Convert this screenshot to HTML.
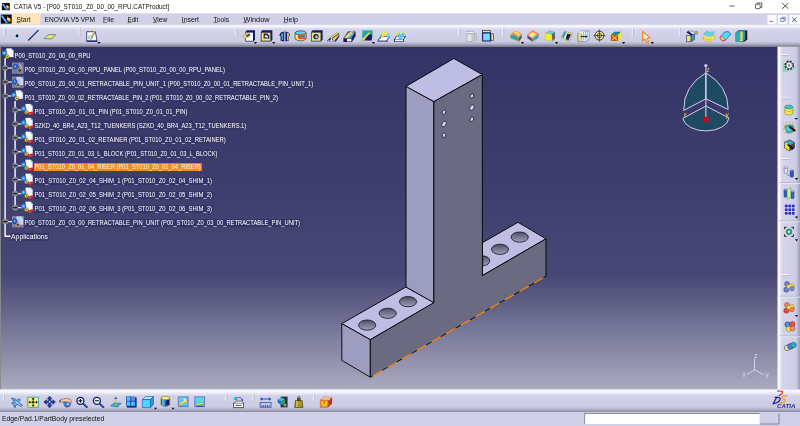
<!DOCTYPE html>
<html><head><meta charset="utf-8"><title>CATIA V5</title>
<style>
html,body{margin:0;padding:0;background:#fff;overflow:hidden}
svg{display:block;will-change:transform}
text{font-family:"Liberation Sans",sans-serif}
.t{font-size:6.4px;fill:#fff}
.m{font-size:6.6px;fill:#111}
</style></head><body>
<svg width="800" height="426" viewBox="0 0 800 426">
<defs>
<linearGradient id="bg" x1="0" y1="0" x2="0" y2="1">
<stop offset="0" stop-color="#333366"/>
<stop offset="0.389" stop-color="#3e3e6e"/>
<stop offset="0.67" stop-color="#484876"/>
<stop offset="0.753" stop-color="#606086"/>
<stop offset="0.825" stop-color="#777799"/>
<stop offset="0.913" stop-color="#9090ac"/>
<stop offset="1" stop-color="#aaaac0"/>
</linearGradient>
<linearGradient id="tb" x1="0" y1="0" x2="0" y2="1">
<stop offset="0" stop-color="#e4e4f4"/>
<stop offset="0.07" stop-color="#fbfbff"/>
<stop offset="0.22" stop-color="#d4d4ea"/>
<stop offset="0.8" stop-color="#cbcbe3"/>
<stop offset="0.93" stop-color="#a6a6c2"/>
<stop offset="1" stop-color="#9494b0"/>
</linearGradient>
<linearGradient id="bb" x1="0" y1="0" x2="0" y2="1">
<stop offset="0" stop-color="#e0e0f0"/>
<stop offset="0.08" stop-color="#fbfbff"/>
<stop offset="0.3" stop-color="#d2d2e9"/>
<stop offset="0.8" stop-color="#cbcbe3"/>
<stop offset="0.95" stop-color="#a8a8c2"/>
<stop offset="1" stop-color="#9a9ab4"/>
</linearGradient>
<linearGradient id="rtb" x1="0" y1="0" x2="1" y2="0">
<stop offset="0" stop-color="#f4f4fc"/>
<stop offset="0.06" stop-color="#ffffff"/>
<stop offset="0.2" stop-color="#d4d4ea"/>
<stop offset="0.82" stop-color="#cdcde5"/>
<stop offset="1" stop-color="#9c9cb6"/>
</linearGradient>
<linearGradient id="hole" x1="0" y1="0" x2="0" y2="1"><stop offset="0" stop-color="#4e4e64"/><stop offset="1" stop-color="#a0a0be"/></linearGradient>
</defs>

<rect x="0" y="0" width="800" height="13.4" fill="#ffffff"/>
<rect x="1.9" y="3" width="7.9" height="7.2" fill="#080810"/><path d="M2.6 4.1 L7.1 10" stroke="#3090e0" stroke-width="1.6"/><path d="M2.6 4.1 L6 8.4" stroke="#b0e0ff" stroke-width="0.6"/><path d="M6.4 4.4 L9.4 7 L8.2 9.4 L6.2 7 Z" fill="#f08020"/><circle cx="7.4" cy="6.8" r="1" fill="#ffe060"/>
<text x="13.8" y="9.1" font-size="6.9" fill="#111" textLength="155.5" lengthAdjust="spacingAndGlyphs">CATIA V5 - [P00_ST010_Z0_00_00_RPU.CATProduct]</text>
<path d="M729.4 6 h5.4" stroke="#222" stroke-width="0.7" fill="none"/>
<rect x="755.5" y="4.2" width="4.6" height="4.4" rx="0.6" fill="none" stroke="#222" stroke-width="0.7"/><path d="M757 4.2 v-1.2 h4.8 v4.6 h-1.6" fill="none" stroke="#222" stroke-width="0.7"/>
<path d="M782.2 3 l6.2 5.8 M788.4 3 l-6.2 5.8" stroke="#222" stroke-width="0.8" fill="none"/>
<rect x="0" y="13.3" width="800" height="11.7" fill="#d0d1e6"/>
<rect x="12" y="13.2" width="28.5" height="11.3" fill="#fde4bc"/>
<rect x="0.8" y="14.6" width="10.8" height="9" fill="#080810"/><path d="M1.6 15.6 L7.4 23.4" stroke="#3090e0" stroke-width="1.9"/><path d="M1.6 15.6 L6 21.4" stroke="#b0e0ff" stroke-width="0.7"/><path d="M7 16 L11 19.4 L9.6 22.4 L6.8 19.4 Z" fill="#f08020"/><circle cx="8.6" cy="19.2" r="1.3" fill="#ffe060"/>
<text class="m" x="16.5" y="21.6" textLength="14.0" lengthAdjust="spacingAndGlyphs">Start</text>
<path d="M16.5 22.6 h3.8" stroke="#111" stroke-width="0.5"/>
<text class="m" x="44.5" y="21.6" textLength="50.5" lengthAdjust="spacingAndGlyphs">ENOVIA V5 VPM</text>
<text class="m" x="103" y="21.6" textLength="11" lengthAdjust="spacingAndGlyphs">File</text>
<path d="M103 22.6 h3.8" stroke="#111" stroke-width="0.5"/>
<text class="m" x="127.5" y="21.6" textLength="10.699999999999989" lengthAdjust="spacingAndGlyphs">Edit</text>
<path d="M127.5 22.6 h3.8" stroke="#111" stroke-width="0.5"/>
<text class="m" x="153" y="21.6" textLength="14.5" lengthAdjust="spacingAndGlyphs">View</text>
<path d="M153 22.6 h3.8" stroke="#111" stroke-width="0.5"/>
<text class="m" x="181.8" y="21.6" textLength="17.19999999999999" lengthAdjust="spacingAndGlyphs">Insert</text>
<path d="M181.8 22.6 h3.8" stroke="#111" stroke-width="0.5"/>
<text class="m" x="213.5" y="21.6" textLength="15.5" lengthAdjust="spacingAndGlyphs">Tools</text>
<path d="M213.5 22.6 h3.8" stroke="#111" stroke-width="0.5"/>
<text class="m" x="243.5" y="21.6" textLength="26.0" lengthAdjust="spacingAndGlyphs">Window</text>
<path d="M243.5 22.6 h3.8" stroke="#111" stroke-width="0.5"/>
<text class="m" x="283.5" y="21.6" textLength="14.5" lengthAdjust="spacingAndGlyphs">Help</text>
<path d="M283.5 22.6 h3.8" stroke="#111" stroke-width="0.5"/>
<rect x="767.5" y="15" width="9" height="9.4" fill="#fbfbff"/><rect x="778" y="15" width="9.5" height="9.4" fill="#fbfbff"/><rect x="789.4" y="15" width="10.6" height="9.4" fill="#fbfbff"/>
<path d="M769.6 21.3 h3.4" stroke="#4860a8" stroke-width="0.9"/>
<rect x="780.8" y="18.6" width="3.2" height="3" fill="none" stroke="#4860a8" stroke-width="0.7"/><path d="M782 18.4 V17.2 H785.4 V20.4 H784.2" fill="none" stroke="#4860a8" stroke-width="0.7"/>
<path d="M792.2 17.6 l4.4 4.2 M796.6 17.6 l-4.4 4.2" stroke="#3858a8" stroke-width="1" fill="none"/>
<rect x="0" y="24.6" width="800" height="21.4" fill="url(#tb)"/>
<rect x="0" y="45.6" width="800" height="1.3" fill="#84847e"/>
<rect x="0" y="46.8" width="777.8" height="342.6" fill="url(#bg)"/>
<rect x="0" y="46.8" width="0.9" height="342.6" fill="#8c8c8a"/>
<g stroke="#000" stroke-width="0.9" stroke-linejoin="round">
<polygon points="341.8,323.7 406,287 434.2,302.7 370.3,339.7" fill="#bebee4"/>
<polygon points="341.8,323.7 370.3,339.7 370.3,377.2 341.8,360.3" fill="#9d9dc0"/>
<polygon points="406,86.4 433.9,101.6 433.9,302.7 406,287" fill="#9d9dc0"/>
<polygon points="453.8,58.5 482.3,74.6 433.9,101.6 406,86.4" fill="#bebee4"/>
<polygon points="482.4,242.7 518,222.3 546,238.8 482.4,275.6" fill="#bebee4"/>
<polygon points="433.9,101.6 482.3,74.6 482.4,275.6 546,238.8 546,276.2 370.3,377.2 370.3,339.7 433.9,302.7" fill="#6a6b81"/>
</g>
<g stroke="#101018" stroke-width="0.8" fill="url(#hole)">
<ellipse cx="367.2" cy="325.1" rx="8.6" ry="5.1"/>
<ellipse cx="387.7" cy="313.3" rx="8.6" ry="5.1"/>
<ellipse cx="408" cy="301.7" rx="8.6" ry="5.1"/>
<ellipse cx="519.7" cy="237.1" rx="8.6" ry="5.1"/>
<ellipse cx="500" cy="249.3" rx="8.6" ry="5.1"/>
<path d="M482.8 255.8 A8.6 5.1 0 0 1 482.8 265.8 Z"/>
</g>
<g stroke="#101018" stroke-width="0.7" fill="#d4d4f4">
<ellipse cx="444" cy="112.2" rx="1.6" ry="2.45" transform="rotate(30 444 112.2)"/>
<ellipse cx="444" cy="124" rx="2.0" ry="3.0" transform="rotate(30 444 124)"/>
<ellipse cx="444" cy="135.2" rx="1.6" ry="2.45" transform="rotate(30 444 135.2)"/>
<ellipse cx="471.9" cy="96" rx="1.6" ry="2.45" transform="rotate(30 471.9 96)"/>
<ellipse cx="471.9" cy="107.6" rx="2.0" ry="3.0" transform="rotate(30 471.9 107.6)"/>
<ellipse cx="471.9" cy="119.2" rx="1.6" ry="2.45" transform="rotate(30 471.9 119.2)"/>
</g>
<path d="M370.3 377.2 L546 276.2" stroke="#ff8a10" stroke-width="1.3" stroke-dasharray="10.7 6.2" stroke-dashoffset="13.9" fill="none"/>
<g stroke="#dcc8f0" stroke-width="1" fill="#1f4a63" stroke-linejoin="round">
<path d="M705.9 72.8 Q683.4 86 683.7 110.5 L705.9 98.8 Z"/>
<path d="M705.9 72.8 Q728.4 86 728.2 109.5 L705.9 98.8 Z"/>
<path d="M705.9 106 L682.8 118.4 A23.2 14 0 0 0 729 118 Z"/>
</g>
<path d="M705.9 66 V118" stroke="#dcc8f0" stroke-width="1.1"/>
<circle cx="705.9" cy="65.6" r="1.6" fill="#dcc8f0"/>
<rect x="703.4" y="116.8" width="5" height="5" fill="#e00010"/>
<g font-size="6.4" fill="#ecd428"><text x="706.6" y="72.2">z</text><text x="683.4" y="117.2">x</text><text x="725.6" y="116.6">y</text></g>
<path d="M754.5 370 V358.5 M754.5 370 L746.5 374.6 M754.5 370 L763.5 374.6" stroke="#d8d8f0" stroke-width="0.9" fill="none"/>
<g font-size="6.5" fill="#d8d8f0"><text x="754.3" y="358">z</text><text x="742.5" y="377">x</text><text x="765.5" y="377">y</text></g>
<path d="M5.1 58 V236.28 H10.8" stroke="#ffffff" stroke-width="1.4" fill="none" stroke-linejoin="round"/>
<path d="M15.1 101 V208.06" stroke="#ffffff" stroke-width="1.4" fill="none"/>
<rect x="13.9" y="51.60" width="77.4" height="7.9" fill="#353568"/>
<text class="t" x="14.5" y="57.80" textLength="76.0" lengthAdjust="spacingAndGlyphs">P00_ST010_Z0_00_00_RPU</text>
<g transform="translate(6.4,48.5)"><path d="M0 0 H5 L7 2 V8.4 H0 Z" fill="#fafaff" stroke="#c8d8f0" stroke-width="0.3"/><path d="M5 0 L7 2 H5 Z" fill="#50c8e0"/><circle cx="-2" cy="4.6" r="2.5" fill="#2488e8" stroke="#1850a8" stroke-width="0.4"/><circle cx="-2" cy="4.6" r="1" fill="#a0e0ff"/><circle cx="0.8" cy="8.2" r="2" fill="#ecd444" stroke="#504010" stroke-width="0.5"/><circle cx="0.8" cy="8.2" r="0.7" fill="#605020"/></g>
<rect x="23.9" y="65.56" width="201.9" height="7.9" fill="#353568"/>
<text class="t" x="24.5" y="71.76" textLength="200.5" lengthAdjust="spacingAndGlyphs">P00_ST010_Z0_00_00_RPU_PANEL (P00_ST010_Z0_00_00_RPU_PANEL)</text>
<path d="M5.2 68.06 H12" stroke="#ffffff" stroke-width="1.1"/>
<circle cx="5.2" cy="68.06" r="2.6" fill="#808084" stroke="#a8a8ac" stroke-width="0.5"/><path d="M2.8000000000000003 68.06 h4.8" stroke="#101010" stroke-width="1"/>
<g transform="translate(12,62.56)"><rect x="0" y="0" width="11.6" height="11.2" fill="#7a7a98"/><path d="M0.5 0.5 H11.1 V10.7 H0.5 Z" fill="none" stroke="#9898b4" stroke-width="0.6" stroke-dasharray="1 1"/><circle cx="3.4" cy="4.2" r="2.4" fill="#2468e0" stroke="#102880" stroke-width="0.5"/><circle cx="3.2" cy="3.8" r="0.9" fill="#60d0ff"/><path d="M7.6 1.2 L10 6.4" stroke="#e8e8f8" stroke-width="0.7"/><path d="M5.4 7.6 L7.4 5.6 L9.8 7.8 L7.6 10.2 Z" fill="#383848" stroke="#d8c040" stroke-width="0.7"/></g>
<rect x="23.9" y="79.52" width="290.15" height="7.9" fill="#353568"/>
<text class="t" x="24.5" y="85.72" textLength="288.75" lengthAdjust="spacingAndGlyphs">P00_ST010_Z0_00_01_RETRACTABLE_PIN_UNIT_1 (P00_ST010_Z0_00_01_RETRACTABLE_PIN_UNIT_1)</text>
<path d="M5.2 82.02 H12" stroke="#ffffff" stroke-width="1.1"/>
<circle cx="5.2" cy="82.02" r="2.6" fill="#808084" stroke="#a8a8ac" stroke-width="0.5"/><path d="M2.8000000000000003 82.02 h4.8" stroke="#101010" stroke-width="1"/>
<g transform="translate(12,76.52)"><rect x="0" y="0" width="11.6" height="11.2" fill="#7a7a98"/><path d="M0.5 0.5 H11.1 V10.7 H0.5 Z" fill="none" stroke="#9898b4" stroke-width="0.6" stroke-dasharray="1 1"/><path d="M4.4 0.4 H9.4 L11.2 2.2 V8.6 H4.4 Z" fill="#d4d4ee"/><path d="M8.6 0.4 H11.2 V3 Z" fill="#40c0e0"/><path d="M6 2 V8 M7.8 2.4 V8" stroke="#a8a8d0" stroke-width="0.6"/><circle cx="2.8" cy="5.4" r="2.4" fill="#2060d8" stroke="#102880" stroke-width="0.5"/><circle cx="2.6" cy="5" r="0.9" fill="#50c8ff"/><path d="M3.8 8.6 L5.8 6.6 L7.8 8.6 L5.8 10.6 Z" fill="#484860" stroke="#d8c050" stroke-width="0.7"/></g>
<rect x="23.9" y="93.48" width="254.9" height="7.9" fill="#353568"/>
<text class="t" x="24.5" y="99.68" textLength="253.5" lengthAdjust="spacingAndGlyphs">P01_ST010_Z0_00_02_RETRACTABLE_PIN_2 (P01_ST010_Z0_00_02_RETRACTABLE_PIN_2)</text>
<path d="M5.2 95.98 H12" stroke="#ffffff" stroke-width="1.1"/>
<circle cx="5.2" cy="95.98" r="2.6" fill="#808084" stroke="#a8a8ac" stroke-width="0.5"/><path d="M2.8000000000000003 95.98 h4.8" stroke="#101010" stroke-width="1"/>
<g transform="translate(15.8,90.38)"><path d="M0 0 H5 L7 2 V8.4 H0 Z" fill="#fafaff" stroke="#c8d8f0" stroke-width="0.3"/><path d="M5 0 L7 2 H5 Z" fill="#50c8e0"/><circle cx="-2" cy="4.6" r="2.5" fill="#2488e8" stroke="#1850a8" stroke-width="0.4"/><circle cx="-2" cy="4.6" r="1" fill="#a0e0ff"/><circle cx="0.8" cy="8.2" r="2" fill="#ecd444" stroke="#504010" stroke-width="0.5"/><circle cx="0.8" cy="8.2" r="0.7" fill="#605020"/></g>
<rect x="33.9" y="107.44" width="154.4" height="7.9" fill="#353568"/>
<text class="t" x="34.5" y="113.64" textLength="153.0" lengthAdjust="spacingAndGlyphs">P01_ST010_Z0_01_01_PIN (P01_ST010_Z0_01_01_PIN)</text>
<path d="M15.1 109.94 H22" stroke="#ffffff" stroke-width="1.1"/>
<circle cx="15.1" cy="109.94" r="2.6" fill="#808084" stroke="#a8a8ac" stroke-width="0.5"/><path d="M12.7 109.94 h4.8" stroke="#101010" stroke-width="1"/>
<g transform="translate(25.6,103.94)"><path d="M0 0 H5 L7 2 V8.4 H0 Z" fill="#fafaff" stroke="#c8d8f0" stroke-width="0.3"/><path d="M5 0 L7 2 H5 Z" fill="#50c8e0"/><circle cx="-2" cy="4.6" r="2.5" fill="#2488e8" stroke="#1850a8" stroke-width="0.4"/><circle cx="-2" cy="4.6" r="1" fill="#a0e0ff"/><circle cx="0.8" cy="8.2" r="2" fill="#ecd444" stroke="#504010" stroke-width="0.5"/><circle cx="0.8" cy="8.2" r="0.7" fill="#605020"/></g><g transform="translate(25.6,103.94)"><path d="M3.2 9 L6.6 7.4 L8 9.4 L4.8 11.2 Z" fill="#e82020"/><circle cx="4.2" cy="10" r="1.2" fill="#e82020"/><circle cx="4.2" cy="10" r="0.5" fill="#ffd0c0"/></g>
<rect x="33.9" y="121.40" width="213.15" height="7.9" fill="#353568"/>
<text class="t" x="34.5" y="127.60" textLength="211.75" lengthAdjust="spacingAndGlyphs">SZKD_40_BR4_A23_T12_TUENKERS (SZKD_40_BR4_A23_T12_TUENKERS.1)</text>
<path d="M15.1 123.90 H22" stroke="#ffffff" stroke-width="1.1"/>
<circle cx="15.1" cy="123.9" r="2.6" fill="#808084" stroke="#a8a8ac" stroke-width="0.5"/><path d="M12.7 123.9 h4.8" stroke="#101010" stroke-width="1"/>
<g transform="translate(25.6,117.9)"><path d="M0 0 H5 L7 2 V8.4 H0 Z" fill="#fafaff" stroke="#c8d8f0" stroke-width="0.3"/><path d="M5 0 L7 2 H5 Z" fill="#50c8e0"/><circle cx="-2" cy="4.6" r="2.5" fill="#2488e8" stroke="#1850a8" stroke-width="0.4"/><circle cx="-2" cy="4.6" r="1" fill="#a0e0ff"/><circle cx="0.8" cy="8.2" r="2" fill="#ecd444" stroke="#504010" stroke-width="0.5"/><circle cx="0.8" cy="8.2" r="0.7" fill="#605020"/></g><g transform="translate(25.6,117.9)"><path d="M3.2 9 L6.6 7.4 L8 9.4 L4.8 11.2 Z" fill="#e82020"/><circle cx="4.2" cy="10" r="1.2" fill="#e82020"/><circle cx="4.2" cy="10" r="0.5" fill="#ffd0c0"/></g>
<rect x="33.9" y="135.36" width="192.65" height="7.9" fill="#353568"/>
<text class="t" x="34.5" y="141.56" textLength="191.25" lengthAdjust="spacingAndGlyphs">P01_ST010_Z0_01_02_RETAINER (P01_ST010_Z0_01_02_RETAINER)</text>
<path d="M15.1 137.86 H22" stroke="#ffffff" stroke-width="1.1"/>
<circle cx="15.1" cy="137.86" r="2.6" fill="#808084" stroke="#a8a8ac" stroke-width="0.5"/><path d="M12.7 137.86 h4.8" stroke="#101010" stroke-width="1"/>
<g transform="translate(25.6,131.86)"><path d="M0 0 H5 L7 2 V8.4 H0 Z" fill="#fafaff" stroke="#c8d8f0" stroke-width="0.3"/><path d="M5 0 L7 2 H5 Z" fill="#50c8e0"/><circle cx="-2" cy="4.6" r="2.5" fill="#2488e8" stroke="#1850a8" stroke-width="0.4"/><circle cx="-2" cy="4.6" r="1" fill="#a0e0ff"/><circle cx="0.8" cy="8.2" r="2" fill="#ecd444" stroke="#504010" stroke-width="0.5"/><circle cx="0.8" cy="8.2" r="0.7" fill="#605020"/></g><g transform="translate(25.6,131.86)"><path d="M3.2 9 L6.6 7.4 L8 9.4 L4.8 11.2 Z" fill="#e82020"/><circle cx="4.2" cy="10" r="1.2" fill="#e82020"/><circle cx="4.2" cy="10" r="0.5" fill="#ffd0c0"/></g>
<rect x="33.9" y="149.32" width="184.4" height="7.9" fill="#353568"/>
<text class="t" x="34.5" y="155.52" textLength="183.0" lengthAdjust="spacingAndGlyphs">P01_ST010_Z0_01_03_L_BLOCK (P01_ST010_Z0_01_03_L_BLOCK)</text>
<path d="M15.1 151.82 H22" stroke="#ffffff" stroke-width="1.1"/>
<circle cx="15.1" cy="151.82" r="2.6" fill="#808084" stroke="#a8a8ac" stroke-width="0.5"/><path d="M12.7 151.82 h4.8" stroke="#101010" stroke-width="1"/>
<g transform="translate(25.6,145.82)"><path d="M0 0 H5 L7 2 V8.4 H0 Z" fill="#fafaff" stroke="#c8d8f0" stroke-width="0.3"/><path d="M5 0 L7 2 H5 Z" fill="#50c8e0"/><circle cx="-2" cy="4.6" r="2.5" fill="#2488e8" stroke="#1850a8" stroke-width="0.4"/><circle cx="-2" cy="4.6" r="1" fill="#a0e0ff"/><circle cx="0.8" cy="8.2" r="2" fill="#ecd444" stroke="#504010" stroke-width="0.5"/><circle cx="0.8" cy="8.2" r="0.7" fill="#605020"/></g><g transform="translate(25.6,145.82)"><path d="M3.2 9 L6.6 7.4 L8 9.4 L4.8 11.2 Z" fill="#e82020"/><circle cx="4.2" cy="10" r="1.2" fill="#e82020"/><circle cx="4.2" cy="10" r="0.5" fill="#ffd0c0"/></g>
<rect x="34.0" y="163.18" width="167.85" height="7.8" fill="#ff8c10"/>
<text class="t" x="34.5" y="169.48" textLength="166.25" lengthAdjust="spacingAndGlyphs">P01_ST010_Z0_01_04_RISER (P01_ST010_Z0_01_04_RISER)</text>
<path d="M15.1 165.78 H22" stroke="#ffffff" stroke-width="1.1"/>
<circle cx="15.1" cy="165.78" r="2.6" fill="#808084" stroke="#a8a8ac" stroke-width="0.5"/><path d="M12.7 165.78 h4.8" stroke="#101010" stroke-width="1"/>
<g transform="translate(25.6,159.78)"><path d="M0 0 H5 L7 2 V8.4 H0 Z" fill="#fafaff" stroke="#c8d8f0" stroke-width="0.3"/><path d="M5 0 L7 2 H5 Z" fill="#50c8e0"/><circle cx="-2" cy="4.6" r="2.5" fill="#2488e8" stroke="#1850a8" stroke-width="0.4"/><circle cx="-2" cy="4.6" r="1" fill="#a0e0ff"/><circle cx="0.8" cy="8.2" r="2" fill="#ecd444" stroke="#504010" stroke-width="0.5"/><circle cx="0.8" cy="8.2" r="0.7" fill="#605020"/></g><g transform="translate(25.6,159.78)"><path d="M3.2 9 L6.6 7.4 L8 9.4 L4.8 11.2 Z" fill="#e82020"/><circle cx="4.2" cy="10" r="1.2" fill="#e82020"/><circle cx="4.2" cy="10" r="0.5" fill="#ffd0c0"/></g>
<rect x="33.9" y="177.24" width="178.9" height="7.9" fill="#353568"/>
<text class="t" x="34.5" y="183.44" textLength="177.5" lengthAdjust="spacingAndGlyphs">P01_ST010_Z0_02_04_SHIM_1 (P01_ST010_Z0_02_04_SHIM_1)</text>
<path d="M15.1 179.74 H22" stroke="#ffffff" stroke-width="1.1"/>
<circle cx="15.1" cy="179.74" r="2.6" fill="#808084" stroke="#a8a8ac" stroke-width="0.5"/><path d="M12.7 179.74 h4.8" stroke="#101010" stroke-width="1"/>
<g transform="translate(25.6,173.74)"><path d="M0 0 H5 L7 2 V8.4 H0 Z" fill="#fafaff" stroke="#c8d8f0" stroke-width="0.3"/><path d="M5 0 L7 2 H5 Z" fill="#50c8e0"/><circle cx="-2" cy="4.6" r="2.5" fill="#2488e8" stroke="#1850a8" stroke-width="0.4"/><circle cx="-2" cy="4.6" r="1" fill="#a0e0ff"/><circle cx="0.8" cy="8.2" r="2" fill="#ecd444" stroke="#504010" stroke-width="0.5"/><circle cx="0.8" cy="8.2" r="0.7" fill="#605020"/></g><g transform="translate(25.6,173.74)"><path d="M3.2 9 L6.6 7.4 L8 9.4 L4.8 11.2 Z" fill="#e82020"/><circle cx="4.2" cy="10" r="1.2" fill="#e82020"/><circle cx="4.2" cy="10" r="0.5" fill="#ffd0c0"/></g>
<rect x="33.9" y="191.20" width="178.9" height="7.9" fill="#353568"/>
<text class="t" x="34.5" y="197.40" textLength="177.5" lengthAdjust="spacingAndGlyphs">P01_ST010_Z0_02_05_SHIM_2 (P01_ST010_Z0_02_05_SHIM_2)</text>
<path d="M15.1 193.70 H22" stroke="#ffffff" stroke-width="1.1"/>
<circle cx="15.1" cy="193.7" r="2.6" fill="#808084" stroke="#a8a8ac" stroke-width="0.5"/><path d="M12.7 193.7 h4.8" stroke="#101010" stroke-width="1"/>
<g transform="translate(25.6,187.7)"><path d="M0 0 H5 L7 2 V8.4 H0 Z" fill="#fafaff" stroke="#c8d8f0" stroke-width="0.3"/><path d="M5 0 L7 2 H5 Z" fill="#50c8e0"/><circle cx="-2" cy="4.6" r="2.5" fill="#2488e8" stroke="#1850a8" stroke-width="0.4"/><circle cx="-2" cy="4.6" r="1" fill="#a0e0ff"/><circle cx="0.8" cy="8.2" r="2" fill="#ecd444" stroke="#504010" stroke-width="0.5"/><circle cx="0.8" cy="8.2" r="0.7" fill="#605020"/></g><g transform="translate(25.6,187.7)"><path d="M3.2 9 L6.6 7.4 L8 9.4 L4.8 11.2 Z" fill="#e82020"/><circle cx="4.2" cy="10" r="1.2" fill="#e82020"/><circle cx="4.2" cy="10" r="0.5" fill="#ffd0c0"/></g>
<rect x="33.9" y="205.16" width="178.9" height="7.9" fill="#353568"/>
<text class="t" x="34.5" y="211.36" textLength="177.5" lengthAdjust="spacingAndGlyphs">P01_ST010_Z0_02_06_SHIM_3 (P01_ST010_Z0_02_06_SHIM_3)</text>
<path d="M15.1 207.66 H22" stroke="#ffffff" stroke-width="1.1"/>
<circle cx="15.1" cy="207.66" r="2.6" fill="#808084" stroke="#a8a8ac" stroke-width="0.5"/><path d="M12.7 207.66 h4.8" stroke="#101010" stroke-width="1"/>
<g transform="translate(25.6,201.66)"><path d="M0 0 H5 L7 2 V8.4 H0 Z" fill="#fafaff" stroke="#c8d8f0" stroke-width="0.3"/><path d="M5 0 L7 2 H5 Z" fill="#50c8e0"/><circle cx="-2" cy="4.6" r="2.5" fill="#2488e8" stroke="#1850a8" stroke-width="0.4"/><circle cx="-2" cy="4.6" r="1" fill="#a0e0ff"/><circle cx="0.8" cy="8.2" r="2" fill="#ecd444" stroke="#504010" stroke-width="0.5"/><circle cx="0.8" cy="8.2" r="0.7" fill="#605020"/></g><g transform="translate(25.6,201.66)"><path d="M3.2 9 L6.6 7.4 L8 9.4 L4.8 11.2 Z" fill="#e82020"/><circle cx="4.2" cy="10" r="1.2" fill="#e82020"/><circle cx="4.2" cy="10" r="0.5" fill="#ffd0c0"/></g>
<rect x="23.9" y="219.12" width="276.9" height="7.9" fill="#353568"/>
<text class="t" x="24.5" y="225.32" textLength="275.5" lengthAdjust="spacingAndGlyphs">P00_ST010_Z0_03_00_RETRACTABLE_PIN_UNIT (P00_ST010_Z0_03_00_RETRACTABLE_PIN_UNIT)</text>
<path d="M5.2 221.62 H12" stroke="#ffffff" stroke-width="1.1"/>
<circle cx="5.2" cy="221.62" r="2.6" fill="#808084" stroke="#a8a8ac" stroke-width="0.5"/><path d="M2.8000000000000003 221.62 h4.8" stroke="#101010" stroke-width="1"/>
<g transform="translate(12,216.12)"><rect x="0" y="0" width="11.6" height="11.2" fill="#7a7a98"/><path d="M0.5 0.5 H11.1 V10.7 H0.5 Z" fill="none" stroke="#9898b4" stroke-width="0.6" stroke-dasharray="1 1"/><path d="M4.4 0.4 H9.4 L11.2 2.2 V8.6 H4.4 Z" fill="#d4d4ee"/><path d="M8.6 0.4 H11.2 V3 Z" fill="#40c0e0"/><path d="M6 2 V8 M7.8 2.4 V8" stroke="#a8a8d0" stroke-width="0.6"/><circle cx="2.8" cy="5.4" r="2.4" fill="#2060d8" stroke="#102880" stroke-width="0.5"/><circle cx="2.6" cy="5" r="0.9" fill="#50c8ff"/><path d="M3.8 8.6 L5.8 6.6 L7.8 8.6 L5.8 10.6 Z" fill="#484860" stroke="#d8c050" stroke-width="0.7"/></g>
<rect x="10.6" y="233.08" width="38.3" height="7.9" fill="#353568"/>
<text class="t" x="11" y="239.28" textLength="37" lengthAdjust="spacingAndGlyphs">Applications</text>
<rect x="777.6" y="46.8" width="22.4" height="343" fill="url(#rtb)"/>

<rect x="0" y="389.3" width="800" height="22" fill="url(#bb)"/>

<rect x="0" y="411.8" width="800" height="14.2" fill="#cfcfe6"/>
<rect x="0" y="410.9" width="800" height="0.9" fill="#80809a"/>
<text x="2" y="421.3" font-size="6.8" fill="#111" textLength="102.3" lengthAdjust="spacingAndGlyphs">Edge/Pad.1/PartBody preselected</text>
<rect x="584.6" y="413.5" width="175" height="10.5" fill="#fff"/><path d="M584.6 424 V413.5 H759.6" fill="none" stroke="#70708a" stroke-width="0.8"/>
<rect x="760.4" y="413.5" width="18.6" height="10.5" fill="#cfcfe6"/><path d="M760.4 424 H779 V413.5" fill="none" stroke="#70708a" stroke-width="0.8"/>
<path d="M4.1 27.4 V36" stroke="#fafaff" stroke-width="1"/><path d="M5.0 27.7 V36.3" stroke="#a8a8c0" stroke-width="0.6"/>
<circle cx="17" cy="36" r="2.1" fill="#f0f0ff"/><circle cx="17.1" cy="36.2" r="1.6" fill="#40c0e8"/><rect x="15.8" y="34.5" width="2.4" height="2.4" rx="0.6" fill="#0c0c50"/>
<path d="M28.2 40.5 L38.5 30.2" stroke="#182080" stroke-width="1.2"/>
<path d="M44.3 38.6 L48.1 34.6 H55.8 L51.7 38.9 Z" fill="#ece264" stroke="#2878a0" stroke-width="0.7"/>
<path d="M79.1 27.4 V36" stroke="#fafaff" stroke-width="1"/><path d="M80.0 27.7 V36.3" stroke="#a8a8c0" stroke-width="0.6"/>
<g transform="translate(86.4,31.4)"><path d="M0.3 0.3 H9 L10.6 9.6 H0.3 Z" fill="#fbfbff" stroke="#20205c" stroke-width="0.8"/><path d="M0.3 9.8 H10.8" stroke="#20205c" stroke-width="1.3"/><circle cx="4" cy="6" r="1.8" fill="none" stroke="#30a060" stroke-width="0.7"/><path d="M4.3 6.8 L8.6 -0.6" stroke="#e8c830" stroke-width="1.5"/><path d="M5.1 7.1 L9.3 -0.2" stroke="#2848a8" stroke-width="0.6"/></g>
<path d="M97.3 42.1 h3.4 l-1.7 1.9 Z" fill="#101010"/>
<path d="M236 27.4 V36" stroke="#fafaff" stroke-width="1"/><path d="M236.9 27.7 V36.3" stroke="#a8a8c0" stroke-width="0.6"/>
<g transform="translate(243,30.2)"><path d="M2.4 1.8 L3.8 0 H12 V9.4 L10.6 11.2 H2.4 Z" fill="#18186a"/><path d="M3 2.4 H10 V10.6 H3 Z" fill="#f8f8ff"/><path d="M0.4 4.8 L5.6 2.6 L6.8 3.6 V6 L1.6 8.6 L0.4 7.4 Z" fill="#f0e468" stroke="#504c20" stroke-width="0.3"/><path d="M3 5.4 L6.8 3.6 V5 L3.4 6.8 Z" fill="#18186a"/></g>
<path d="M253.70000000000002 42.1 h3.4 l-1.7 1.9 Z" fill="#101010"/>
<g transform="translate(260.6,30.2)"><path d="M0.2 1.8 L1.6 0 H11.8 V9.4 L10.4 11.2 H0.2 Z" fill="#18186a"/><path d="M0.9 2.5 H9.8 V10.5 H0.9 Z" fill="#f0e468"/><path d="M3 3.4 H6.6 L8.8 5.6 V8.4 H3 Z" fill="#18186a"/><path d="M4.2 5 H6.4 L7.6 6.2 V7.4 H4.2 Z" fill="#e4e4fa"/></g>
<path d="M272.0 42.1 h3.4 l-1.7 1.9 Z" fill="#101010"/>
<g transform="translate(278.6,30.2)"><path d="M5.6 1.2 Q1 1.6 0.8 5.6 L2 6 V10.6 L5.6 11.2 Z" fill="#18186a"/><path d="M4.6 2.6 Q2.2 3 2 5.4 L3 5.8 V9.6 L4.6 10 Z" fill="#30b0b8"/><path d="M6.8 1.2 Q11.2 1.6 11.4 5.6 L10.2 6 V10.6 L6.8 11.2 Z" fill="#18186a"/><path d="M8.6 2.4 Q10.4 3.2 10.6 5.2 L9.8 5.6 V10 L8.6 10.4 Z" fill="#f0e468"/><path d="M6.2 0.2 V11.6" stroke="#8080b0" stroke-width="0.5"/></g>
<g transform="translate(294.5,30.2)"><path d="M0.6 2.6 V8.8 Q5.8 12.6 11.6 8.8 V2.6 Z" fill="#f0e468" stroke="#18186a" stroke-width="0.6"/><ellipse cx="6.1" cy="2.6" rx="5.4" ry="2" fill="#50d8f0" stroke="#18186a" stroke-width="0.6"/><path d="M11.6 4.4 H4.4 Q2.4 6.6 4.4 8.8 H11.6 V7.6 H6 V5.6 H11.6 Z" fill="#e03828" stroke="#f0a020" stroke-width="0.3"/><path d="M6 5.8 H11 L10 7.4 H6 Z" fill="#2070a0"/></g>
<g transform="translate(311,30.2)"><path d="M0.2 1.8 L1.6 0 H11.6 V9.2 L10.2 11.2 H0.2 Z" fill="#18186a"/><path d="M0.8 2.4 H9.6 V10.6 H0.8 Z" fill="#f0e468"/><circle cx="5" cy="6.4" r="2.7" fill="#18186a"/><circle cx="5.3" cy="6.6" r="1.5" fill="#9898c0"/><circle cx="5.8" cy="6.8" r="0.8" fill="#f0f0ff"/></g>
<g transform="translate(327.2,30.2)"><path d="M0.4 10 L3.4 7 L10.4 2.4 L12 3.6 V6.4 L8.6 11.6 H0.4 Z" fill="#18186a"/><path d="M0.8 10.2 H3.6 V8.4 L5 7.6 V10.2 H8 V11.2 H0.8 Z" fill="#fafaff"/><path d="M3 7.2 L10.4 2 L11.6 3 L5.4 7.4 L4.6 8.6 L3 8.4 Z" fill="#f0e468" stroke="#706820" stroke-width="0.3"/><path d="M5.6 8 L11.4 3.8 V5.6 L7.6 10 H5.6 Z" fill="#d8d060"/></g>
<g transform="translate(343.4,30)"><path d="M0 8.4 L4.6 1.6 H12.2 V6 L8.6 12 H0 Z" fill="#18186a"/><path d="M0.8 8.2 L5 2.4 H11.4 L7.6 8.2 Z" fill="#dcdcf4"/><path d="M1 7.6 L8.6 0.6 L10 1.4 L3 8.2 Z" fill="#f0e468" stroke="#706820" stroke-width="0.3"/><path d="M4.4 8 L9.8 3 L11 3.4 L6.8 8.2 Z" fill="#28a0b0"/><path d="M3.6 8.8 H8 V11.4 H3.6 Z" fill="#fafaff"/></g>
<g transform="translate(360.6,30)"><path d="M1.6 0.4 H12 V8 H1.6 Z" fill="#28a8a0"/><path d="M3.6 10.6 L8 4.4 H11.2 V10.6 Z" fill="#18186a"/><path d="M0.4 10.4 L8.4 2 L9.8 3 L2 11.2 Z" fill="#f0e468" stroke="#706820" stroke-width="0.3"/></g>
<path d="M371.7 42.1 h3.4 l-1.7 1.9 Z" fill="#101010"/>
<g transform="translate(377.6,30)"><path d="M0.2 10 L3 6.4 H12.6 L9.8 10 V12 H0.2 Z" fill="#18186a"/><path d="M1 10 L3.4 7 H11.4 L9 10 Z" fill="#fafaff"/><path d="M0.8 10.4 H9 V11.4 H0.8 Z" fill="#fafaff"/><path d="M1.4 8.4 L4.6 3 L5.8 3.6 L3 8.8 Z" fill="#28a0b0"/><path d="M4.8 8.4 Q4.6 2.2 7.6 2.2 Q9.8 2.6 9.4 6" fill="none" stroke="#f0e838" stroke-width="2"/><path d="M9 4.4 L11.4 3 L12 6.6 L9.8 8 Z" fill="#50d8f0"/></g>
<g transform="translate(393.8,30)"><path d="M0.2 9.4 L2.4 6 H12.4 L10 9.4 V12 H0.2 Z" fill="#18186a"/><path d="M1 9.6 H9.2 V11.4 H1 Z" fill="#fafaff"/><path d="M1.2 9.2 L3 6.6 H11.2 L9.2 9.2 Z" fill="#fafaff"/><path d="M3 3.8 L5.4 3 L6.8 6 L9 2.8 L11 3.8 L7.4 9.4 L5.6 9.2 Z" fill="#50d8f0" stroke="#1880a0" stroke-width="0.3"/><path d="M1.6 4.2 L4.6 2 L5.4 3 L3 5.4 Z" fill="#f0e838"/><path d="M9 2.8 L11.6 0.8 L12.2 2 L11 3.8 Z" fill="#f0e838"/></g>
<path d="M459 27.4 V36" stroke="#fafaff" stroke-width="1"/><path d="M459.9 27.7 V36.3" stroke="#a8a8c0" stroke-width="0.6"/>
<g transform="translate(465,30)"><path d="M0.4 1.4 H8.6 M0.4 3.6 H8.6 M2 3.6 V11.4 M7 3.6 V11.4 M2 11.4 H7 M9.4 2.4 V10.4 M11.4 4 V10.4 M9.4 10.4 H11.4 M9.4 4 H12" fill="none" stroke="#b4b4be" stroke-width="1"/><rect x="2.6" y="4.6" width="3.8" height="6.2" fill="#e4e4ea"/><path d="M1 2 H8 V3 H1 Z" fill="#ececf2"/></g>
<g transform="translate(481.8,30)"><rect x="0.8" y="0.6" width="7.6" height="2.2" fill="#f0e468" stroke="#18186a" stroke-width="0.6"/><rect x="0.8" y="3" width="7.8" height="8" fill="#50d8f0" stroke="#18186a" stroke-width="1"/><rect x="2" y="4.2" width="5.4" height="5.6" fill="#70e0f8"/><rect x="9.2" y="3.8" width="2.6" height="6.6" fill="#f0e468" stroke="#18186a" stroke-width="0.6"/></g>
<path d="M502.9 27.4 V36" stroke="#fafaff" stroke-width="1"/><path d="M503.79999999999995 27.7 V36.3" stroke="#a8a8c0" stroke-width="0.6"/>
<g transform="translate(509.8,30.2)"><path d="M0.6 4.6 L3.6 1.6 Q8.6 0 11.8 4.4 L9 8 Q5.6 3.4 0.6 4.6 Z" fill="#f08878" stroke="#e8c020" stroke-width="0.5"/><path d="M5 1.6 Q8.6 1.4 10.4 4.4 L8.6 6 Q7 3 4 2.6 Z" fill="#f8e870"/><path d="M0.6 4.6 Q5.6 3.4 9 8 V11.4 L0.6 8 Z" fill="#28a0b0" stroke="#e8c020" stroke-width="0.5"/><path d="M9 8 L11.8 4.4 V7.8 L9 11.4 Z" fill="#484858"/></g>
<path d="M520.8 42.1 h3.4 l-1.7 1.9 Z" fill="#101010"/>
<g transform="translate(527,30.2)"><path d="M0.4 5 L5.4 0.6 L11.6 3.6 L5 8.6 Z" fill="#f4a090" stroke="#e04030" stroke-width="0.5"/><path d="M1.8 5 L5.4 2 L9.4 4 L5 7.2 Z" fill="#f8e878"/><path d="M5 8.6 L11.6 3.6 V7.8 L5.6 11.6 Z" fill="#30a8d0" stroke="#e8c040" stroke-width="0.3"/><path d="M0.4 5 L5 8.6 L5.6 11.6 L0.4 8 Z" fill="#505060"/></g>
<g transform="translate(543.8,30)"><path d="M2 3 L6 0.8 L11.2 2.2 L7.8 4.2 Z" fill="#50d8f0" stroke="#e04030" stroke-width="0.3"/><path d="M7.8 4.2 L11.2 2.2 V8.6 L8.6 11.4 Z" fill="#606070"/><path d="M2 3 L7.8 4.2 L8.6 11.4 L0.6 9.2 Z" fill="#f4f020" stroke="#a09820" stroke-width="0.3"/></g>
<path d="M554.9 42.1 h3.4 l-1.7 1.9 Z" fill="#101010"/>
<g transform="translate(561,30)"><path d="M0.4 7.4 L3.4 1.2 L11.4 3.4 L8 11.4 Z" fill="#f0e468" stroke="#606090" stroke-width="0.4"/><path d="M5.6 3.4 L10 4.4 L7.4 10 L5 9.2 Z" fill="#18186a"/><path d="M0.8 7.2 L3.6 1.8 L5.6 2.4 L2.8 8 Z" fill="#28a0b0"/><path d="M2.8 8 L5.6 2.4 L6.6 2.8 L4 8.6 Z" fill="#f4f4c0"/></g>
<g transform="translate(577.5,30)"><path d="M0.4 3.4 L3.4 1 H11.8 V9 L8.6 11.6 H0.4 Z" fill="#e0f0f8" stroke="#4868b0" stroke-width="0.5"/><path d="M0.6 3.6 H4 V11.4 H0.6 Z" fill="#f0e468" stroke="#4868b0" stroke-width="0.4"/><path d="M0.6 3.6 L3.4 1.2 H6 L4 3.6 Z" fill="#f8f4a0"/><path d="M6 2 V10.6 M8 1.4 V10.6 M10 1.4 V9.6" stroke="#60b8c8" stroke-width="0.7"/><path d="M3 6.6 H8.6" stroke="#18186a" stroke-width="1"/><path d="M8.2 5.2 L10 6.6 L8.2 8 Z" fill="#18186a"/></g>
<g transform="translate(593.8,29.8)"><circle cx="5.6" cy="5.8" r="4.5" fill="#e8e078" stroke="#18186a" stroke-width="0.8"/><circle cx="5.6" cy="5.8" r="2.2" fill="none" stroke="#504818" stroke-width="0.7"/><path d="M5.6 -0.2 V11.8 M-0.2 5.8 H11.4" stroke="#18186a" stroke-width="0.7"/></g>
<g transform="translate(610.5,30.6)"><path d="M0.4 4.2 L4 1.2 H10.8 L7.6 4.2 Z" fill="#18888c"/><path d="M7.6 4.2 L10.8 1.2 V6.8 L7.6 10.4 Z" fill="#f0ec30"/><path d="M0.4 4.2 H7.6 V10.4 H0.4 Z" fill="#e83820"/><path d="M1.4 5 L6.8 9.6 M6.8 5 L1.4 9.6" stroke="#f0c020" stroke-width="1.2"/><path d="M0.4 4.2 h1.4 v1.2 h-1.4 Z M6.2 9.2 h1.4 v1.2 h-1.4 Z M0.4 9.2 h1.4 v1.2 h-1.4 Z M6.2 4.2 h1.4 v1.2 h-1.4 Z" fill="#30a040"/></g>
<path d="M621.9 42.1 h3.4 l-1.7 1.9 Z" fill="#101010"/>
<path d="M632.3 27.4 V36" stroke="#fafaff" stroke-width="1"/><path d="M633.1999999999999 27.7 V36.3" stroke="#a8a8c0" stroke-width="0.6"/>
<path d="M642.6 31.4 V41 L644.9 38.9 L646.8 42.6 L648.6 41.7 L646.7 38.2 L650 37.8 Z" fill="#fffaf0" stroke="#f08020" stroke-width="1.1" stroke-linejoin="round"/>
<path d="M650.5999999999999 42.1 h3.4 l-1.7 1.9 Z" fill="#101010"/>
<path d="M679.3 27.4 V36" stroke="#fafaff" stroke-width="1"/><path d="M680.1999999999999 27.7 V36.3" stroke="#a8a8c0" stroke-width="0.6"/>
<g transform="translate(685.7,30)"><path d="M0.8 5.4 H5.4 V11.6 H0.8 Z" fill="#f0e468" stroke="#18186a" stroke-width="0.6"/><path d="M5.4 5.4 L8.8 4 V9.6 L5.4 11.6 Z" fill="#28a0b0" stroke="#18186a" stroke-width="0.5"/><path d="M0.6 2.2 L2.4 1 L7.4 4.4 L5.6 5.4 Z" fill="#18186a"/><path d="M2.4 1 L7.6 1.4 L8.8 4 L7.4 4.4 Z" fill="#fafaff" stroke="#18186a" stroke-width="0.4"/><rect x="8.8" y="1.2" width="3.2" height="3.2" fill="#808088"/><rect x="9.8" y="2.2" width="1.2" height="1.2" fill="#f0e468"/></g>
<g transform="translate(702.7,30)"><path d="M0.6 7.6 L3 5 Q7.4 7.6 12 5 V8.6 Q8 12.6 4.4 11.4 L0.6 10 Z" fill="#f0e468" stroke="#a09828" stroke-width="0.4"/><path d="M0.6 8.6 Q5 11 9 9" fill="none" stroke="#a09828" stroke-width="0.4"/><path d="M0.6 4.4 L3.6 1 Q7.6 3 12 1.6 L9.6 5.6 Q5 8 0.6 4.4 Z" fill="#50d8f0" stroke="#e06040" stroke-width="0.3"/><path d="M0.6 4.4 Q5 8 9.6 5.6 V7.2 Q5 9.4 0.6 6.2 Z" fill="#e8dc60"/></g>
<g transform="translate(719,30)"><path d="M0.8 7.2 L5.6 2 Q9.6 0 12 4 L6.2 10.6 Q2 12 0.8 7.2 Z" fill="#50d8f0" stroke="#3050e0" stroke-width="0.7"/><path d="M1 7.2 Q2 6 3.8 7 Q6 8.4 5.8 10.6 Q2.4 11.6 1 7.2 Z" fill="#f8d880" stroke="#e83020" stroke-width="0.7"/></g>
<g transform="translate(735.1,30)"><path d="M3 0.4 H12.2 V9.2 L10 11.6 H3 Z" fill="#181820"/><path d="M0.6 2.6 L3 0.8 H10 V9.6 L7.6 11.6 H0.6 Z" fill="#20a0a8" stroke="#106070" stroke-width="0.4"/><path d="M0.6 2.6 H7.6 V11.6 H0.6 Z" fill="#28b0b8"/><path d="M4.8 1.6 H7.4 V11 H4.8 Z" fill="#f0e468"/><path d="M4.8 3 H6 M4.8 4.6 H6 M4.8 6.2 H6 M4.8 7.8 H6 M4.8 9.4 H6" stroke="#504818" stroke-width="0.5"/><path d="M10 0.8 V9.6" stroke="#e04030" stroke-width="0.3"/></g>
<path d="M3.8 393.6 V401" stroke="#fafaff" stroke-width="1"/><path d="M4.7 393.90000000000003 V401.3" stroke="#a8a8c0" stroke-width="0.6"/>
<g transform="translate(11,396.6)"><path d="M0.6 1.6 L3.6 2 L5.4 3.6 L8.4 2.2 L9.4 3.2 L7.4 5.4 L11.4 8.6 L10.4 10 L6 7.6 L4.4 9.4 L4.6 10.6 L3.4 10.8 L2.6 8 L0.4 6.6 L1.4 5.8 L3 6 L4 4.8 L1.6 3.4 Z" fill="#58b0e8" stroke="#183888" stroke-width="0.6"/><path d="M4.6 5 L9.6 8.6" stroke="#c0f0ff" stroke-width="0.8"/></g>
<g transform="translate(27.4,396.8)"><rect x="0.4" y="0.4" width="10.6" height="10" fill="#f4f07a" stroke="#28a0a0" stroke-width="0.8"/><path d="M1.6 5.4 H9.8 M5.7 1.4 V9.4" stroke="#101010" stroke-width="0.7"/><path d="M1 5.4 l1.8 -1.4 v2.8 Z M10.4 5.4 l-1.8 -1.4 v2.8 Z M5.7 0.8 l-1.4 1.8 h2.8 Z M5.7 10 l-1.4 -1.8 h2.8 Z" fill="#101010"/><rect x="4.9" y="4.6" width="1.6" height="1.6" fill="#101010"/></g>
<g transform="translate(43.8,396.2)"><path d="M5.8 0 L8 2.6 H6.6 V5 H9 V3.6 L11.6 5.8 L9 8 V6.6 H6.6 V9 H8 L5.8 11.6 L3.6 9 H5 V6.6 H2.6 V8 L0 5.8 L2.6 3.6 V5 H5 V2.6 H3.6 Z" fill="#2038b0" stroke="#081860" stroke-width="0.6"/><rect x="5" y="5" width="1.6" height="1.6" fill="#d0d8ff"/></g>
<g transform="translate(59.5,396.5)"><path d="M0.6 3.6 L3 2.6 Q7 1 11 2.8 Q12.6 4.6 11.4 6.4 Q7 4.6 3 5.4 L0.6 5.6 Z" fill="#f4c8a8" stroke="#703020" stroke-width="0.5"/><path d="M0.4 3.4 V5.8" stroke="#183888" stroke-width="0.9"/><path d="M4 6 Q8 5 11.4 7.2 Q10.4 11 7 10.8 Q4.4 10 4 6 Z" fill="#3888e0" stroke="#1848a0" stroke-width="0.5"/><path d="M5 9.6 Q7.6 11.4 10.4 9" fill="none" stroke="#d02020" stroke-width="0.7"/><circle cx="8.4" cy="7.6" r="1" fill="#c8e8ff"/></g>
<g transform="translate(76,396.2)"><circle cx="4.4" cy="4.6" r="3.5" fill="#f0f8ff" stroke="#102070" stroke-width="1.3"/><path d="M7.2 7.4 L11.4 11.4" stroke="#102070" stroke-width="2"/><path d="M8 7.6 L11.2 10.6" stroke="#50b8e8" stroke-width="0.7"/><path d="M2.4 4.6 H6.4" stroke="#101010" stroke-width="1.1"/><path d="M4.4 2.6 V6.6" stroke="#101010" stroke-width="1.1"/></g>
<g transform="translate(92.5,396.2)"><circle cx="4.4" cy="4.6" r="3.5" fill="#f0f8ff" stroke="#102070" stroke-width="1.3"/><path d="M7.2 7.4 L11.4 11.4" stroke="#102070" stroke-width="2"/><path d="M8 7.6 L11.2 10.6" stroke="#50b8e8" stroke-width="0.7"/><path d="M2.4 4.6 H6.4" stroke="#101010" stroke-width="1.1"/></g>
<g transform="translate(110,396.5)"><path d="M0.4 9.4 L4 6.6 H11.2 L7.6 10.6 Z" fill="#40b0c0" stroke="#106878" stroke-width="0.5"/><path d="M5.8 8.6 V1.6" stroke="#e0a820" stroke-width="1"/><path d="M4.2 2.6 L5.8 0 L7.4 2.6 Z" fill="#3060d0"/></g>
<g transform="translate(126,396.6)"><rect x="1" y="1" width="9.6" height="10" fill="#181880"/><rect x="0.3" y="0.3" width="8.8" height="9.2" fill="#40c8f8" stroke="#1838a0" stroke-width="0.6"/><rect x="5" y="0.6" width="3.8" height="3.8" fill="#7080e0"/><path d="M4.7 0.3 V9.5 M0.3 4.7 H9.1" stroke="#1838a0" stroke-width="0.8"/></g>
<g transform="translate(141.8,396)"><path d="M0.6 3.6 L3.6 0.6 H11.6 L8.6 3.6 Z" fill="#a8f0ff" stroke="#1848b0" stroke-width="0.6"/><path d="M8.6 3.6 L11.6 0.6 V8.4 L8.6 11.6 Z" fill="#2898d8" stroke="#1848b0" stroke-width="0.6"/><path d="M0.6 3.6 H8.6 V11.6 H0.6 Z" fill="#50d8f8" stroke="#1848b0" stroke-width="0.6"/></g>
<path d="M153.8 407.70000000000005 h3.4 l-1.7 1.9 Z" fill="#101010"/>
<g transform="translate(160.4,395.6)"><path d="M0.6 2.4 V9.4 Q4.8 12.4 9.4 9.4 V2.4 Z" fill="#18186a" stroke="#a89820" stroke-width="0.9"/><path d="M1.6 3.6 H4.4 V10.4 Q2.6 10.2 1.6 9.4 Z" fill="#40c0e8"/><path d="M4.4 3.6 H6 V10.6 H4.4 Z" fill="#2858d0"/><ellipse cx="5" cy="2.4" rx="4.4" ry="1.8" fill="#e8dc70" stroke="#a89820" stroke-width="0.9"/><ellipse cx="5" cy="2.5" rx="2.6" ry="0.9" fill="#f8f4c0"/></g>
<path d="M171.3 407.70000000000005 h3.4 l-1.7 1.9 Z" fill="#101010"/>
<g transform="translate(177.8,396.4)"><rect x="0.5" y="0.5" width="9.8" height="9.8" fill="#58d0f0" stroke="#7878c0" stroke-width="1"/><path d="M1.4 8 Q5 3 9.6 3.6 L9 6 Q5.4 6 3 9.6 Z" fill="#f0e060" stroke="#706010" stroke-width="0.3"/><path d="M2 9.6 H9.6" stroke="#20a0a8" stroke-width="1"/><circle cx="7" cy="3.4" r="1.2" fill="#e8f0ff"/></g>
<g transform="translate(194.3,396.4)"><rect x="0.5" y="0.5" width="9.8" height="9.8" fill="#50d8f8" stroke="#7878c0" stroke-width="1"/><path d="M2 8.6 Q5 5 9 6 L8.6 8 Q5 7.6 3 9.8 Z" fill="#f0e060" stroke="#706010" stroke-width="0.3"/><path d="M2 9.8 H9.4" stroke="#18386a" stroke-width="0.9"/></g>
<path d="M226 393.6 V401" stroke="#fafaff" stroke-width="1"/><path d="M226.9 393.90000000000003 V401.3" stroke="#a8a8c0" stroke-width="0.6"/>
<g transform="translate(232.5,396)"><path d="M1 7 H11 V11.6 H1 Z" fill="#f4f4f4" stroke="#202020" stroke-width="0.7"/><path d="M2.4 7 L3.6 5 H9.6 L11 7" fill="#d8d8d8" stroke="#202020" stroke-width="0.5"/><path d="M3 9.4 H9" stroke="#202020" stroke-width="0.7"/><circle cx="3.4" cy="2.6" r="1.9" fill="#30a8e0"/><path d="M5.6 1.6 Q9 0.6 9.6 4" fill="none" stroke="#2848c0" stroke-width="0.9"/><path d="M8.4 3.6 L9.8 5.4 L10.8 3.4 Z" fill="#2848c0"/><path d="M6 2.6 l1.2 0.4 l-0.4 1.2" fill="#f0d020" stroke="#f0d020" stroke-width="0.5"/></g>
<path d="M253 393.6 V401" stroke="#fafaff" stroke-width="1"/><path d="M253.9 393.90000000000003 V401.3" stroke="#a8a8c0" stroke-width="0.6"/>
<g transform="translate(259.5,396)"><path d="M1.6 3 H10.6" stroke="#2040c0" stroke-width="0.9"/><path d="M0.4 3 L2.8 1.2 V4.8 Z M11.8 3 L9.4 1.2 V4.8 Z" fill="#2040c0"/><rect x="0.6" y="6.6" width="11" height="4.6" fill="#b8c8f0" stroke="#2040a0" stroke-width="0.7"/><path d="M2.4 9 V11 M4.2 9 V11 M6 9 V11 M7.8 9 V11 M9.6 9 V11" stroke="#802020" stroke-width="0.7"/></g>
<g transform="translate(277,396)"><path d="M3.6 0.6 H10.6 V11.4 H3.6 Z" fill="#303038"/><path d="M0.6 3 L4.6 1.6 L8 3.6 L4 5.4 Z" fill="#30c0d8"/><path d="M0.6 3 L4 5.4 V9 L0.6 6.6 Z" fill="#2070c0"/><path d="M4 5.4 L8 3.6 V7.2 L4 9 Z" fill="#30a060"/><circle cx="8" cy="9" r="1.6" fill="#909098"/></g>
<g transform="translate(294.5,396)"><path d="M1 4.6 H7.6 L8.4 11.4 H0.2 Z" fill="#a89820" stroke="#282808" stroke-width="0.6"/><path d="M2.4 5 V11 " stroke="#e8e060" stroke-width="1"/><rect x="2.8" y="2.6" width="3" height="2" fill="#605810" stroke="#282808" stroke-width="0.4"/><circle cx="4.3" cy="1.6" r="1.1" fill="none" stroke="#282808" stroke-width="0.7"/></g>
<path d="M313.8 393.6 V401" stroke="#fafaff" stroke-width="1"/><path d="M314.7 393.90000000000003 V401.3" stroke="#a8a8c0" stroke-width="0.6"/>
<g transform="translate(319.5,396)"><path d="M0.8 4 L5 1 L12.6 1.6 L8.6 5 Z" fill="#f0c8a8" stroke="#c04818" stroke-width="0.4"/><path d="M8.6 5 L12.6 1.6 V7.4 L8.6 11.4 Z" fill="#b83818"/><path d="M0.8 4 H8.6 V11.4 H0.8 Z" fill="#f08828" stroke="#c04818" stroke-width="0.4"/><path d="M2.6 5.6 Q2.6 9.6 4.8 9.6 Q7 9.6 7 5.6" fill="none" stroke="#f8e020" stroke-width="1.3"/></g>
<path d="M781.7 54.5 H790" stroke="#fafaff" stroke-width="1"/><path d="M782.0 55.4 H790.3" stroke="#a8a8c0" stroke-width="0.6"/>
<path d="M782.8 62.4 V72.9 L797 67.5 Z" fill="#8cd4bc"/>
<circle cx="789.2" cy="65.3" r="4.1" fill="#f4f4f4" stroke="#303030" stroke-width="1.5" stroke-dasharray="2 1.22"/><circle cx="789.2" cy="65.3" r="3.3" fill="#f6f6f6" stroke="#404040" stroke-width="0.8"/><circle cx="789.2" cy="65.3" r="1.1" fill="#60c8a8" stroke="#505050" stroke-width="0.4"/>
<path d="M781.7 98 H790" stroke="#fafaff" stroke-width="1"/><path d="M782.0 98.9 H790.3" stroke="#a8a8c0" stroke-width="0.6"/>
<g transform="translate(784.2,104.6)"><path d="M0.6 2.4 V8.8 Q4.4 12 8.6 8.8 V2.4 Z" fill="#f0ec50" stroke="#807818" stroke-width="0.5"/><ellipse cx="4.6" cy="2.4" rx="4" ry="1.9" fill="#48c0c8" stroke="#186878" stroke-width="0.5"/><path d="M0.6 5.6 Q4.4 8.6 8.6 5.6" fill="none" stroke="#908820" stroke-width="0.5"/></g>
<path d="M794.5 117.89999999999999 h3.4 l-1.7 1.9 Z" fill="#101010"/>
<g transform="translate(783,122)"><path d="M1 4.4 Q5 0.8 10.6 3 L12 8.6 Q9 12 3.6 11.2 Z" fill="#2898a8" stroke="#e8b830" stroke-width="0.7"/><path d="M2.6 5.6 Q5.4 3.6 8.6 4.6 L9.4 8.2 Q7 9.8 4.2 9.4 Z" fill="#58c8d8"/><path d="M6.4 4.6 L12.2 9" stroke="#101010" stroke-width="2"/><path d="M0.4 1.4 l1 0.8 M3.2 0 l0.4 1 M6.6 -0.4 v1 M9.6 0.4 l-0.6 0.8 M0 7 h0.9 M1.6 11 l0.8 -0.6" stroke="#e84828" stroke-width="0.6"/></g>
<g transform="translate(783,139.4)"><path d="M1.6 3 L6.4 0.4 L11.4 3 L6.4 5.8 Z" fill="#30b0b8"/><path d="M1.6 3 L6.4 5.8 V11.4 L1.6 8.6 Z" fill="#f0e838"/><path d="M6.4 5.8 L11.4 3 V8.6 L6.4 11.4 Z" fill="#484850"/><path d="M1.6 3 L6.4 0.4 L11.4 3 V8.6 L6.4 11.4 L1.6 8.6 Z" fill="none" stroke="#202028" stroke-width="0.6"/><path d="M4.6 4.8 L10.2 9.6" stroke="#101010" stroke-width="1.8"/><path d="M3.4 3.6 L5.2 5" stroke="#f4f4ff" stroke-width="0.8"/><circle cx="1.2" cy="1.6" r="0.4" fill="#e84828"/><circle cx="3.4" cy="11" r="0.4" fill="#e84828"/></g>
<path d="M781.7 158.6 H790" stroke="#fafaff" stroke-width="1"/><path d="M782.0 159.5 H790.3" stroke="#a8a8c0" stroke-width="0.6"/>
<g transform="translate(783.6,166)"><path d="M0.6 1.6 V7 Q2.2 8.2 3.8 7 V1.6 Z" fill="#e8e8f8" stroke="#405090" stroke-width="0.5"/><ellipse cx="2.2" cy="1.6" rx="1.6" ry="0.9" fill="#f8f8ff" stroke="#405090" stroke-width="0.5"/><path d="M6.6 5 V10.6 Q8.2 11.8 9.8 10.6 V5 Z" fill="#2858d0" stroke="#102060" stroke-width="0.5"/><ellipse cx="8.2" cy="5" rx="1.6" ry="0.9" fill="#80b0ff" stroke="#102060" stroke-width="0.5"/><path d="M3.6 9 H6" stroke="#404040" stroke-width="0.6"/></g>
<path d="M794.8 178.1 h3.4 l-1.7 1.9 Z" fill="#101010"/>
<path d="M779 182.8 H800" stroke="#a4a4bc" stroke-width="0.7"/><path d="M779 183.60000000000002 H800" stroke="#f4f4ff" stroke-width="0.7"/>
<g transform="translate(783.4,187)"><path d="M0.6 3 V9.6 Q2 10.8 3.6 9.6 V3 Z" fill="#2868d8" stroke="#102060" stroke-width="0.5"/><ellipse cx="2.1" cy="3" rx="1.5" ry="0.9" fill="#90c0ff" stroke="#102060" stroke-width="0.4"/><path d="M7.6 4.6 V11 Q9 12.2 10.6 11 V4.6 Z" fill="#2868d8" stroke="#102060" stroke-width="0.5"/><ellipse cx="9.1" cy="4.6" rx="1.5" ry="0.9" fill="#90c0ff" stroke="#102060" stroke-width="0.4"/><path d="M3.8 2.6 L7.4 0.6 V9.6 L3.8 12 Z" fill="#f0ec70" stroke="#38a890" stroke-width="0.6"/></g>
<g transform="translate(784,205)"><rect x="0.8" y="-0.4" width="2.9" height="2.9" rx="1.2" fill="#3030c8"/><rect x="4.3" y="-0.4" width="2.9" height="2.9" rx="1.2" fill="#3030c8"/><rect x="7.8" y="-0.4" width="2.9" height="2.9" rx="1.2" fill="#3030c8"/><rect x="0.8" y="3.2" width="2.9" height="2.9" rx="1.2" fill="#3030c8"/><rect x="4.3" y="3.2" width="2.9" height="2.9" rx="1.2" fill="#3030c8"/><rect x="7.8" y="3.2" width="2.9" height="2.9" rx="1.2" fill="#3030c8"/><rect x="0.8" y="6.8" width="2.9" height="2.9" rx="1.2" fill="#3030c8"/><rect x="4.3" y="6.8" width="2.9" height="2.9" rx="1.2" fill="#3030c8"/><rect x="7.8" y="6.8" width="2.9" height="2.9" rx="1.2" fill="#3030c8"/></g>
<path d="M794.8 216.5 h3.4 l-1.7 1.9 Z" fill="#101010"/>
<path d="M779 221 H800" stroke="#a4a4bc" stroke-width="0.7"/><path d="M779 221.8 H800" stroke="#f4f4ff" stroke-width="0.7"/>
<g transform="translate(784,226.6)"><circle cx="5" cy="5.2" r="2.7" fill="#30b890" stroke="#106048" stroke-width="0.7"/><circle cx="5" cy="5.2" r="1.1" fill="#e8f0a0"/><path d="M0.6 2.6 V0.6 H2.6 M7.4 0.6 H9.4 V2.6 M9.4 7.8 V9.8 H7.4 M2.6 9.8 H0.6 V7.8" fill="none" stroke="#101010" stroke-width="0.9"/></g>
<path d="M794.8 239.29999999999998 h3.4 l-1.7 1.9 Z" fill="#101010"/>
<path d="M781.7 274.5 H790" stroke="#fafaff" stroke-width="1"/><path d="M782.0 275.4 H790.3" stroke="#a8a8c0" stroke-width="0.6"/>
<g transform="translate(783,281)"><circle cx="4" cy="3" r="2.4" fill="#7080d8" stroke="#283890" stroke-width="0.5"/><circle cx="3.4" cy="8.6" r="2.6" fill="#7080d8" stroke="#283890" stroke-width="0.5"/><path d="M3 4.6 L9.6 2.6 L11.6 5.6 L5 8 Z" fill="#f0e050" stroke="#807018" stroke-width="0.5"/><circle cx="9" cy="7.6" r="2.2" fill="#8090e0" stroke="#283890" stroke-width="0.5"/></g>
<path d="M779 296.3 H800" stroke="#a4a4bc" stroke-width="0.7"/><path d="M779 297.1 H800" stroke="#f4f4ff" stroke-width="0.7"/>
<g transform="translate(783,302)"><circle cx="4" cy="3" r="2.4" fill="#f08858" stroke="#a02818" stroke-width="0.5"/><circle cx="3.4" cy="8.6" r="2.6" fill="#e84830" stroke="#a02818" stroke-width="0.5"/><path d="M3 4.6 L9.6 2.6 L11.6 5.6 L5 8 Z" fill="#f0e050" stroke="#807018" stroke-width="0.5"/><circle cx="9" cy="7.6" r="2.2" fill="#f08858" stroke="#a02818" stroke-width="0.5"/></g>
<path d="M794.8 315.1 h3.4 l-1.7 1.9 Z" fill="#101010"/>
<g transform="translate(784,320.6)"><circle cx="3.6" cy="4" r="2.8" fill="#5888e8" stroke="#183890" stroke-width="0.5"/><circle cx="8.4" cy="3.6" r="2.6" fill="#e85838" stroke="#902818" stroke-width="0.5"/><circle cx="4.6" cy="8.4" r="2.6" fill="#f0e050" stroke="#807018" stroke-width="0.5"/><circle cx="8.6" cy="8" r="2.4" fill="#f09080" stroke="#902818" stroke-width="0.5"/></g>
<path d="M779 336 H800" stroke="#a4a4bc" stroke-width="0.7"/><path d="M779 336.8 H800" stroke="#f4f4ff" stroke-width="0.7"/>
<g transform="translate(784,341.4)"><circle cx="3.2" cy="6.4" r="2.8" fill="#f0ec80" stroke="#283890" stroke-width="0.6"/><circle cx="6.4" cy="5" r="2.8" fill="#5080e0" stroke="#183890" stroke-width="0.6"/><circle cx="9.4" cy="3.6" r="2.8" fill="#28b0b8" stroke="#106070" stroke-width="0.6"/></g>
<text x="777" y="407.8" font-size="4.9" font-style="italic" font-weight="bold" fill="#34248c" textLength="18.4" lengthAdjust="spacingAndGlyphs">CATIA</text><path d="M777.6 391.1 Q781.4 390.8 782.8 391.9 Q782.6 393.4 779.3 395.7" fill="none" stroke="#e02030" stroke-width="1.1" stroke-linecap="round"/><path d="M776.6 397.5 L773.2 403.7 M775.2 397.3 Q780.6 397 780.2 399.2 Q779.6 402.6 773 403.8" fill="none" stroke="#30208c" stroke-width="1.3" stroke-linecap="round"/><path d="M786.6 395.7 Q781.6 395.6 781.8 397.4 Q782.2 398.6 784.2 399.4 Q785.6 400.4 784.4 402 Q783 403.2 779.8 402.9" fill="none" stroke="#f0a020" stroke-width="1.3" stroke-linecap="round"/>
</svg></body></html>
